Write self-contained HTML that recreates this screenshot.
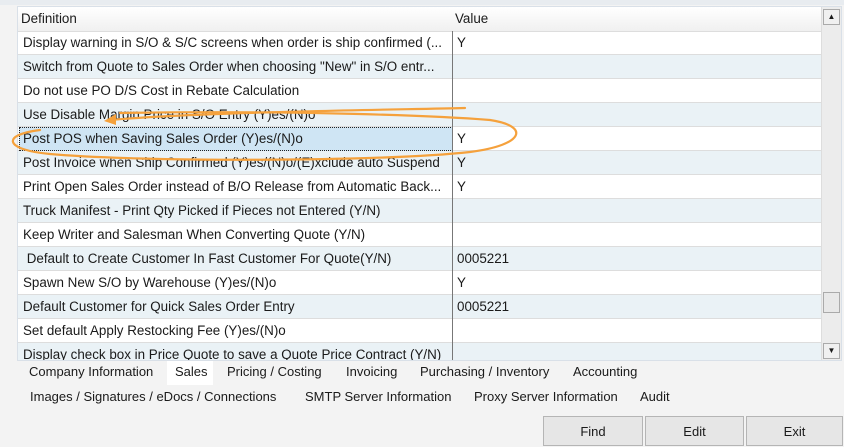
<!DOCTYPE html>
<html><head><style>
body{margin:0;width:844px;height:446px;background:#f3f3f3;font-family:"Liberation Sans",sans-serif;font-size:13.4px;color:#1a1a1a;overflow:hidden;position:relative}
.grid{position:absolute;left:17px;top:6px;width:823px;height:353px;background:#fff;border:1px solid #d9e0e8;overflow:hidden}
.hdr{position:absolute;left:0;top:0;height:24px;width:803px;background:linear-gradient(#fff,#f0f0f0);border-bottom:1px solid #ddd}
.row{position:absolute;left:0;width:803px;height:23px;border-bottom:1px solid #ddd;line-height:23px}
.c1{position:absolute;left:5px;top:0;white-space:nowrap;overflow:hidden;max-width:428px}
.c2{position:absolute;left:439px;top:0}
.vline{position:absolute;left:434px;top:24px;width:1px;height:340px;background:#777}
.sb{position:absolute;left:803px;top:0;width:19px;height:353px;background:#ececec;border-left:1px solid #ddd}
.sbtn{position:absolute;left:1px;width:15px;height:14px;border:1px solid #aaa;background:#f0f0f0;font-size:8px;text-align:center;line-height:14px}
.tabs{position:absolute;font-size:13px}
.btn{position:absolute;top:416px;height:30px;background:#e6e6e6;border:1px solid #b5b5b5;text-align:center;line-height:30px;box-sizing:border-box;font-size:13px}
</style></head><body>
<div style="position:absolute;left:0;top:0;width:844px;height:5px;background:#e8ecf0"></div>
<div class="grid">
<div class="hdr"><span class="c1" style="left:3px;line-height:24px">Definition</span><span class="c2" style="left:437px;line-height:24px">Value</span></div>
<div class="row" style="top:24px"><span class="c1">Display warning in S/O &amp; S/C screens when order is ship confirmed (...</span><span class="c2">Y</span></div>
<div class="row" style="top:48px;background:#eaf2f6"><span class="c1">Switch from Quote to Sales Order when choosing "New" in S/O entr...</span></div>
<div class="row" style="top:72px"><span class="c1">Do not use PO D/S Cost in Rebate Calculation</span></div>
<div class="row" style="top:96px;background:#eaf2f6"><span class="c1">Use Disable Margin Price in S/O Entry (Y)es/(N)o</span></div>
<div class="row" style="top:120px"><div style="position:absolute;left:1px;top:0;width:432px;height:22px;background:#cfe5f4;border:1px dotted #222"></div><span class="c1">Post POS when Saving Sales Order (Y)es/(N)o</span><span class="c2">Y</span></div>
<div class="row" style="top:144px;background:#eaf2f6"><span class="c1">Post Invoice when Ship Confirmed (Y)es/(N)o/(E)xclude auto Suspend</span><span class="c2">Y</span></div>
<div class="row" style="top:168px"><span class="c1">Print Open Sales Order instead of B/O Release from Automatic Back...</span><span class="c2">Y</span></div>
<div class="row" style="top:192px;background:#eaf2f6"><span class="c1">Truck Manifest - Print Qty Picked if Pieces not Entered (Y/N)</span></div>
<div class="row" style="top:216px"><span class="c1">Keep Writer and Salesman When Converting Quote (Y/N)</span></div>
<div class="row" style="top:240px;background:#eaf2f6"><span class="c1">&nbsp;Default to Create Customer In Fast Customer For Quote(Y/N)</span><span class="c2">0005221</span></div>
<div class="row" style="top:264px"><span class="c1">Spawn New S/O by Warehouse (Y)es/(N)o</span><span class="c2">Y</span></div>
<div class="row" style="top:288px;background:#eaf2f6"><span class="c1">Default Customer for Quick Sales Order Entry</span><span class="c2">0005221</span></div>
<div class="row" style="top:312px"><span class="c1">Set default Apply Restocking Fee (Y)es/(N)o</span></div>
<div class="row" style="top:336px;background:#eaf2f6"><span class="c1">Display check box in Price Quote to save a Quote Price Contract (Y/N)</span></div>
<div class="vline"></div>
<div class="sb"><div class="sbtn" style="top:2px">▲</div><div style="position:absolute;left:1px;top:285px;width:15px;height:19px;border:1px solid #aaa;background:#e8e8e8"></div><div class="sbtn" style="top:336px">▼</div></div>
</div>
<div style="position:absolute;left:167px;top:361px;width:46px;height:24px;background:#fff"></div>
<div class="tabs" style="left:29px;top:364px">Company Information</div>
<div class="tabs" style="left:175px;top:364px">Sales</div>
<div class="tabs" style="left:227px;top:364px">Pricing / Costing</div>
<div class="tabs" style="left:346px;top:364px">Invoicing</div>
<div class="tabs" style="left:420px;top:364px">Purchasing / Inventory</div>
<div class="tabs" style="left:573px;top:364px">Accounting</div>
<div class="tabs" style="left:30px;top:389px">Images / Signatures / eDocs / Connections</div>
<div class="tabs" style="left:305px;top:389px">SMTP Server Information</div>
<div class="tabs" style="left:474px;top:389px">Proxy Server Information</div>
<div class="tabs" style="left:640px;top:389px">Audit</div>
<div class="btn" style="left:543px;width:100px">Find</div>
<div class="btn" style="left:645px;width:99px">Edit</div>
<div class="btn" style="left:746px;width:97px">Exit</div>
<svg style="position:absolute;left:0;top:0" width="844" height="446">
<g fill="none" stroke="#f5a13c" stroke-width="2.2" stroke-linecap="round">
<path d="M465 108 C380 110 200 112 110 120"/>
<path d="M120 113 C300 110 440 116 490 120 C530 126 525 145 470 152 C380 162 140 162 50 154 C5 150 0 135 40 130"/>
</g>
<path d="M104 121 L116 114 L116 125 Z" fill="#f5a13c"/>
</svg>
</body></html>
